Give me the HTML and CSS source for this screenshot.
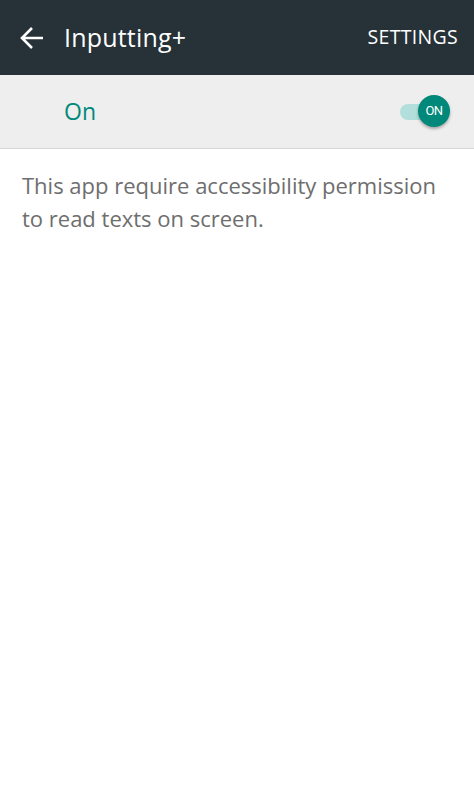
FILE: index.html
```html
<!DOCTYPE html>
<html>
<head>
<meta charset="utf-8">
<link rel="stylesheet" href="styles.css">
</head>
<body>
<header class="appbar">
  <svg class="back" width="24" height="24" viewBox="0 0 24 24"><path d="M23 12H2.5M12 2L2 12l10 10" fill="none" stroke="#fff" stroke-width="2.6" stroke-linecap="butt"/></svg>
  <div class="title">Inputting+</div>
  <div class="action">SETTINGS</div>
</header>
<div class="switchbar">
  <div class="on-label">On</div>
  <div class="toggle">
    <div class="track"></div>
    <div class="thumb">ON</div>
  </div>
</div>
<p class="desc">This app require accessibility permission to read texts on screen.</p>
</body>
</html>
```
FILE: styles.css
```css
html, body { margin: 0; padding: 0; background: #fff; }
body { font-family: "Open Sans", "Noto Sans", sans-serif; width: 474px; height: 810px; }
.appbar {
  height: 75px; background: #263238; display: flex; align-items: center;
  padding: 0 16px 0 20px; box-sizing: border-box; color: #fff;
}
.back { flex: none; margin-right: 20px; margin-top: 0; }
.title { font-size: 25px; flex: 1; letter-spacing: 0.2px; margin-top: -2px; }
.action { font-size: 19.5px; letter-spacing: 0.3px; margin-top: -2px; }
.switchbar {
  height: 74px; background: #eeeeee; border-bottom: 1px solid #d6d6d6;
  display: flex; align-items: center; padding: 0 24px 0 64px; box-sizing: border-box;
}
.on-label { flex: 1; font-size: 23px; color: #00897b; margin-top: -1px; }
.toggle { position: relative; width: 50px; height: 34px; }
.track { position: absolute; left: 0; top: 9px; width: 38px; height: 16px; border-radius: 8px; background: #b2dfdb; }
.thumb {
  position: absolute; right: 0; top: 0; width: 32px; height: 32px; border-radius: 50%;
  background: #00897b; color: #fff; font-size: 13px; display: flex; align-items: center; justify-content: center;
  box-shadow: 0 2px 3px rgba(0,0,0,0.3); font-family: "Roboto", sans-serif; letter-spacing: -0.5px;
}
.desc {
  margin: 0; padding: 20px 22px 0 22px; font-size: 22px; line-height: 33px; color: #6e6e6e;
}
```
